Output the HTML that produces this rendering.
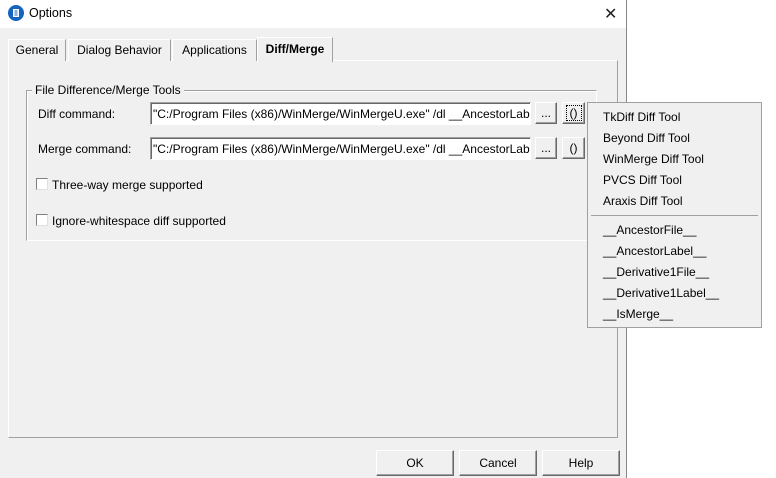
<!DOCTYPE html>
<html><head><style>
*{box-sizing:border-box;margin:0;padding:0}
body{width:776px;height:478px;background:#fff;position:relative;overflow:hidden;font-family:"Liberation Sans",Arial,sans-serif;font-size:12px;color:#000}
.a{position:absolute}
.win{left:0;top:0;width:627px;height:478px;background:#f0f0f0;border-right:1px solid #888}
.title{left:0;top:0;width:626px;height:28px;background:#fff}
.tab{position:absolute;top:39px;height:22px;border:1px solid #fff;border-right:1px solid #a0a0a0;border-bottom:none;text-align:center;line-height:20px;background:#f0f0f0;font-size:12px}
.panel{left:8px;top:60px;width:610px;height:378px;border:1px solid #fff;border-right-color:#a0a0a0;border-bottom-color:#a0a0a0}
.grp{left:26px;top:90px;width:571px;height:151px;border:1px solid #a0a0a0;border-right-color:#fff;border-bottom-color:#fff;box-shadow:inset 1px 1px 0 #fff, 1px 1px 0 #a0a0a0 inset}
.fld{position:absolute;left:150px;width:381px;height:23px;background:#fff;border:1px solid #a0a0a0;border-right-color:#fff;border-bottom-color:#fff;box-shadow:inset 1px 1px 0 #696969;padding:4px 0 0 2px;white-space:nowrap;overflow:hidden;font-size:12px}
.btn{position:absolute;background:#f0f0f0;border:1px solid #fff;border-right-color:#696969;border-bottom-color:#696969;box-shadow:inset -1px -1px 0 #a0a0a0;text-align:center;font-size:12px}
.cb{position:absolute;left:36px;width:12px;height:12px;background:#fff;border:1px solid #808080;border-right-color:#e0e0e0;border-bottom-color:#e0e0e0}
.lbl{position:absolute;font-size:12px}
.menu{left:587px;top:102px;width:175px;height:226px;background:#f0f0f0;border:1px solid #a0a0a0}
.mi{position:absolute;left:15px;font-size:12px}
</style></head><body>
<div class="a win"></div>
<div class="a title"></div>
<svg class="a" style="left:8px;top:5px" width="16" height="16" viewBox="0 0 16 16"><circle cx="8" cy="8" r="8" fill="#1565c0"/><rect x="5" y="4" width="6" height="8" fill="#fff"/><path d="M6.5 6h3M6.5 8h3M6.5 10h3" stroke="#1565c0" stroke-width="1"/></svg>
<div class="a" style="left:29px;top:6px;font-size:12.5px">Options</div>
<div class="a" style="left:604px;top:4px;font-size:16px;color:#222">✕</div>
<div class="a panel"></div>
<div class="tab" style="left:8px;width:58px">General</div>
<div class="tab" style="left:68px;width:103px">Dialog Behavior</div>
<div class="tab" style="left:172px;width:85px">Applications</div>
<div class="tab" style="left:257px;top:37px;height:25px;width:76px;font-weight:bold;line-height:22px">Diff/Merge</div>
<div class="a grp"></div>
<div class="a" style="left:32px;top:83px;background:#f0f0f0;padding:0 3px;font-size:12px">File Difference/Merge Tools</div>
<div class="lbl" style="left:38px;top:107px">Diff command:</div>
<div class="fld" style="top:102px">"C:/Program Files (x86)/WinMerge/WinMergeU.exe" /dl __AncestorLabel__</div>
<div class="btn" style="left:535px;top:102px;width:22px;height:22px;line-height:20px">...</div>
<div class="btn" style="left:562px;top:102px;width:23px;height:22px;line-height:20px"><span style="outline:1px dotted #000;padding:0 3px">()</span></div>
<div class="lbl" style="left:38px;top:142px">Merge command:</div>
<div class="fld" style="top:137px">"C:/Program Files (x86)/WinMerge/WinMergeU.exe" /dl __AncestorLabel__</div>
<div class="btn" style="left:535px;top:137px;width:22px;height:22px;line-height:20px">...</div>
<div class="btn" style="left:562px;top:137px;width:23px;height:22px;line-height:20px">()</div>
<div class="cb" style="top:178px"></div>
<div class="lbl" style="left:52px;top:178px">Three-way merge supported</div>
<div class="cb" style="top:214px"></div>
<div class="lbl" style="left:52px;top:214px">Ignore-whitespace diff supported</div>
<div class="btn" style="left:376px;top:450px;width:78px;height:26px;line-height:24px">OK</div>
<div class="btn" style="left:459px;top:450px;width:78px;height:26px;line-height:24px">Cancel</div>
<div class="btn" style="left:542px;top:450px;width:78px;height:26px;line-height:24px">Help</div>
<div class="a menu">
<div class="mi" style="top:7px">TkDiff Diff Tool</div>
<div class="mi" style="top:28px">Beyond Diff Tool</div>
<div class="mi" style="top:49px">WinMerge Diff Tool</div>
<div class="mi" style="top:70px">PVCS Diff Tool</div>
<div class="mi" style="top:91px">Araxis Diff Tool</div>
<div class="a" style="left:3px;top:112px;width:167px;height:1px;background:#a0a0a0"></div>
<div class="mi" style="top:120px">__AncestorFile__</div>
<div class="mi" style="top:141px">__AncestorLabel__</div>
<div class="mi" style="top:162px">__Derivative1File__</div>
<div class="mi" style="top:183px">__Derivative1Label__</div>
<div class="mi" style="top:204px">__IsMerge__</div>
</div>
</body></html>
